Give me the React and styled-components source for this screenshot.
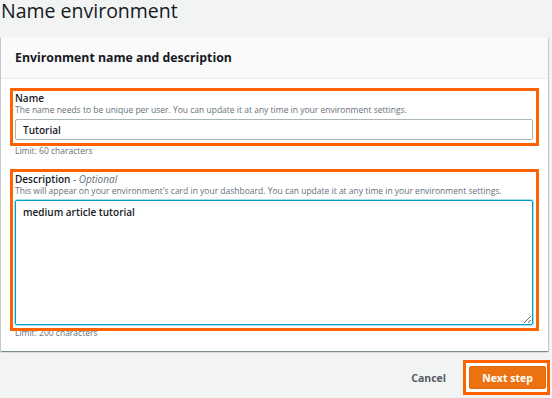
import React from "react";
import styled, { createGlobalStyle } from "styled-components";

const GlobalStyle = createGlobalStyle`
  html, body { margin: 0; padding: 0; }
  body {
    background: #f2f3f3;
    font-family: "Open Sans", "Liberation Sans", Arial, sans-serif;
    color: #16191f;
    overflow: hidden;
  }
`;

const Page = styled.div`
  width: 552px;
  height: 398px;
  box-sizing: border-box;
  padding: 0 4px 0 1px;
  display: flex;
  flex-direction: column;
`;

const Title = styled.h1`
  margin: 0 0 15px 0;
  font-size: 19.5px;
  line-height: 22px;
  font-weight: 400;
  color: #16191f;
`;

const Card = styled.section`
  background: #ffffff;
  box-shadow: 0 1px 1px 0 rgba(0, 28, 36, 0.3), 1px 1px 1px 0 rgba(0, 28, 36, 0.15),
    -1px 1px 1px 0 rgba(0, 28, 36, 0.15);
  display: flex;
  flex-direction: column;
`;

const CardHeader = styled.header`
  height: 41px;
  background: #fafafa;
  border-bottom: 1px solid #eaeded;
  display: flex;
  align-items: center;
  padding: 0 14px;
`;

const CardTitle = styled.h2`
  margin: 0;
  font-size: 12.3px;
  font-weight: 700;
  color: #16191f;
`;

const CardBody = styled.div`
  padding: 9px 9px 13px 9px;
  display: flex;
  flex-direction: column;
  gap: 13px;
`;

const Field = styled.div`
  display: flex;
  flex-direction: column;
`;

const Highlight = styled.div`
  position: relative;
  z-index: 1;
  border: 3px solid #ff6200;
  padding: ${(p) => p.$pad || "1px 3px 3px 2px"};
  display: flex;
  flex-direction: column;
  background: ${(p) => (p.$fill ? "#ffffff" : "transparent")};
`;

const Label = styled.label`
  font-size: 10px;
  line-height: 12px;
  font-weight: 600;
  color: #16191f;
`;

const Optional = styled.i`
  font-weight: 400;
  color: #687078;
`;

const Hint = styled.div`
  font-size: 8.5px;
  line-height: 11px;
  color: #687078;
  margin-bottom: 4px;
  white-space: nowrap;
`;

const TextInput = styled.input`
  box-sizing: border-box;
  height: 21px;
  width: 100%;
  border: 1px solid #aab7b8;
  border-radius: 2px;
  padding: 0 7px;
  font-family: inherit;
  font-size: 10px;
  font-weight: 600;
  color: #16191f;
  background: #fff;
  outline: none;
`;

const TextArea = styled.textarea`
  box-sizing: border-box;
  height: 125px;
  width: 100%;
  display: block;
  border: 1px solid #00a1c9;
  box-shadow: 0 0 0 1px rgba(0, 161, 201, 0.35);
  border-radius: 2px;
  padding: 4px 7px;
  font-family: inherit;
  font-size: 10px;
  line-height: 14px;
  font-weight: 600;
  color: #16191f;
  background: #fff;
  resize: vertical;
  outline: none;
`;

const Constraint = styled.div`
  font-size: 8.5px;
  line-height: 11px;
  color: #687078;
  margin-top: ${(p) => p.$offset || "-1px"};
  padding-left: 5px;
`;

const Footer = styled.footer`
  margin-top: 9px;
  margin-right: -2px;
  display: flex;
  justify-content: flex-end;
  align-items: center;
`;

const LinkButton = styled.button`
  border: none;
  background: transparent;
  padding: 4px 17px;
  font-family: inherit;
  font-size: 10.5px;
  font-weight: 700;
  color: #545b64;
  cursor: pointer;
`;

const PrimaryButton = styled.button`
  box-sizing: border-box;
  height: 23px;
  width: 77px;
  border: 1px solid #dd6b10;
  border-radius: 2px;
  background: #ec7211;
  color: #ffffff;
  font-family: inherit;
  font-size: 10.5px;
  font-weight: 700;
  padding: 0;
  cursor: pointer;
`;

export default function App() {
  return (
    <>
      <GlobalStyle />
      <Page>
        <Title>Name environment</Title>
        <Card>
          <CardHeader>
            <CardTitle>Environment name and description</CardTitle>
          </CardHeader>
          <CardBody>
            <Field>
              <Highlight>
                <Label>Name</Label>
                <Hint>
                  The name needs to be unique per user. You can update it at any time in your
                  environment settings.
                </Hint>
                <TextInput defaultValue="Tutorial" readOnly />
              </Highlight>
              <Constraint>Limit: 60 characters</Constraint>
            </Field>
            <Field>
              <Highlight>
                <Label>
                  Description <Optional>- Optional</Optional>
                </Label>
                <Hint>
                  This will appear on your environment's card in your dashboard. You can update it
                  at any time in your environment settings.
                </Hint>
                <TextArea defaultValue="medium article tutorial" readOnly />
              </Highlight>
              <Constraint $offset="-4px">Limit: 200 characters</Constraint>
            </Field>
          </CardBody>
        </Card>
        <Footer>
          <LinkButton>Cancel</LinkButton>
          <Highlight $pad="3px 1px 3px 3px" $fill>
            <PrimaryButton>Next step</PrimaryButton>
          </Highlight>
        </Footer>
      </Page>
    </>
  );
}
